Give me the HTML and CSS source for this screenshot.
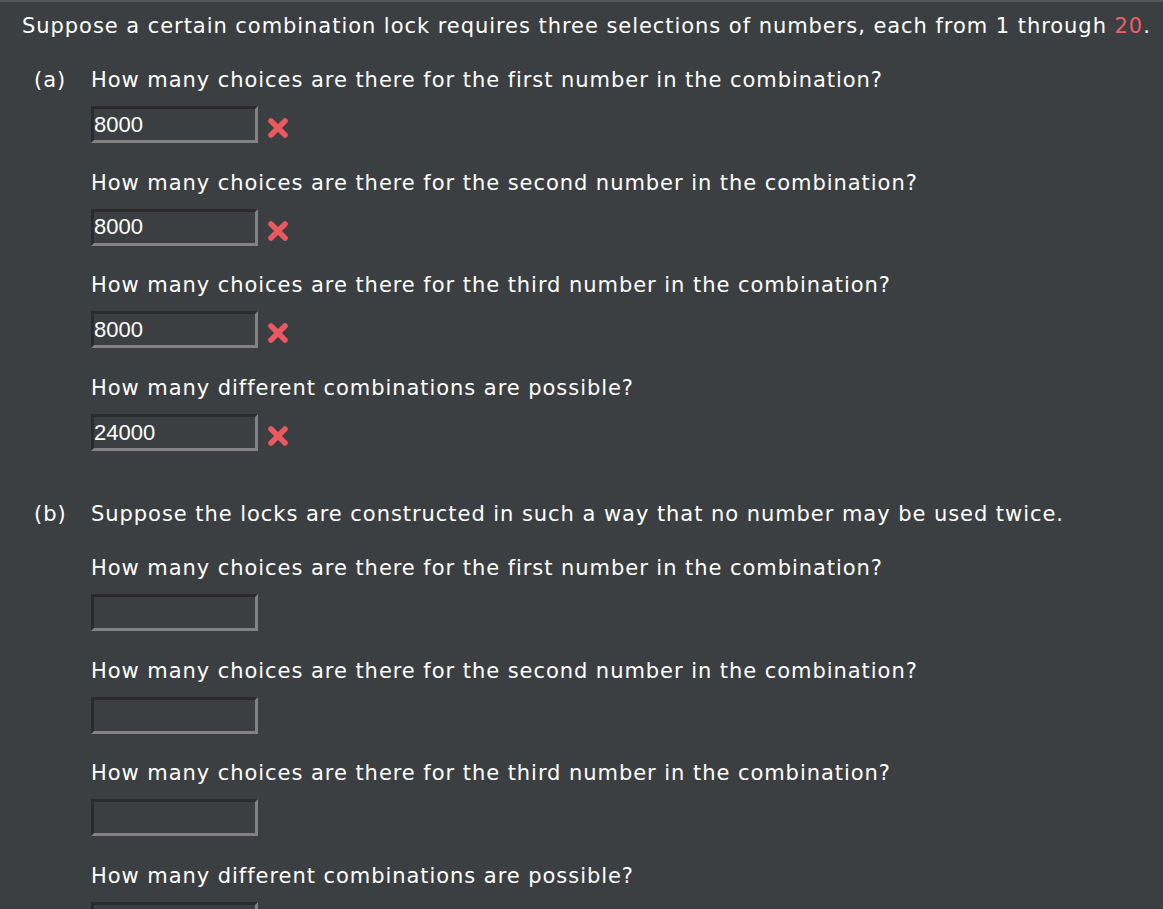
FILE: index.html
```html
<!DOCTYPE html>
<html>
<head>
<meta charset="utf-8">
<link rel="stylesheet" href="styles.css">
</head>
<body>
<div class="page">
  <p class="intro">Suppose a certain combination lock requires three selections of numbers, each from 1 through <span class="hl">20</span>.</p>

  <div class="part part-a">
    <span class="label">(a)</span>
    <div class="body">
      <div class="q first">How many choices are there for the first number in the combination?</div>
      <div class="answer"><input class="box" type="text" value="8000"><svg class="wrong" viewBox="0 0 24 24"><path d="M5 5 L19 19 M19 5 L5 19"/></svg></div>
      <div class="q">How many choices are there for the second number in the combination?</div>
      <div class="answer"><input class="box" type="text" value="8000"><svg class="wrong" viewBox="0 0 24 24"><path d="M5 5 L19 19 M19 5 L5 19"/></svg></div>
      <div class="q">How many choices are there for the third number in the combination?</div>
      <div class="answer"><input class="box" type="text" value="8000"><svg class="wrong" viewBox="0 0 24 24"><path d="M5 5 L19 19 M19 5 L5 19"/></svg></div>
      <div class="q">How many different combinations are possible?</div>
      <div class="answer"><input class="box" type="text" value="24000"><svg class="wrong" viewBox="0 0 24 24"><path d="M5 5 L19 19 M19 5 L5 19"/></svg></div>
    </div>
  </div>

  <div class="part part-b">
    <span class="label">(b)</span>
    <div class="body">
      <div class="q first">Suppose the locks are constructed in such a way that no number may be used twice.</div>
      <div class="q sub">How many choices are there for the first number in the combination?</div>
      <div class="answer"><input class="box" type="text" value=""></div>
      <div class="q">How many choices are there for the second number in the combination?</div>
      <div class="answer"><input class="box" type="text" value=""></div>
      <div class="q">How many choices are there for the third number in the combination?</div>
      <div class="answer"><input class="box" type="text" value=""></div>
      <div class="q">How many different combinations are possible?</div>
      <div class="answer"><input class="box" type="text" value=""></div>
    </div>
  </div>
</div>
</body>
</html>
```

FILE: styles.css
```css
html, body {
  margin: 0;
  padding: 0;
  background: #3c3f41;
}
body {
  border-top: 2px solid #56595b;
  color: #ffffff;
  font-family: "DejaVu Sans", Verdana, sans-serif;
  font-size: 21px;
  letter-spacing: 0.95px;
  line-height: 24px;
  height: 907px;
  overflow: hidden;
}
.page {
  padding: 12px 0 0 22px;
}
.intro {
  margin: 0;
  white-space: nowrap;
}
.hl {
  color: #ec5f66;
}
.part {
  display: flex;
  align-items: flex-start;
}
.part-a {
  margin-top: 30px;
}
.part-b {
  margin-top: 51px;
}
.label {
  width: 69px;
  padding-left: 12px;
  box-sizing: border-box;
  flex: none;
}
.body {
  display: flex;
  flex-direction: column;
}
.q {
  margin-top: 27.7px;
  white-space: nowrap;
}
.q.first {
  margin-top: 0;
}
.q.sub {
  margin-top: 30px;
}
.answer {
  display: flex;
  align-items: center;
  margin-top: 14px;
  height: 37px;
}
.box {
  box-sizing: border-box;
  width: 167px;
  height: 37px;
  margin: 0;
  padding: 0;
  border-style: solid;
  border-width: 3px;
  border-color: #2b2b2b #828282 #828282 #2b2b2b;
  background: #3c3f41;
  color: #ffffff;
  font-family: "Liberation Sans", Arial, sans-serif;
  font-size: 22px;
  letter-spacing: 0;
  outline: none;
}
.wrong {
  width: 24px;
  height: 24px;
  margin-left: 8px;
  margin-top: 7px;
  fill: none;
  stroke: #ea5860;
  stroke-width: 5.5;
  stroke-linecap: round;
}
```
